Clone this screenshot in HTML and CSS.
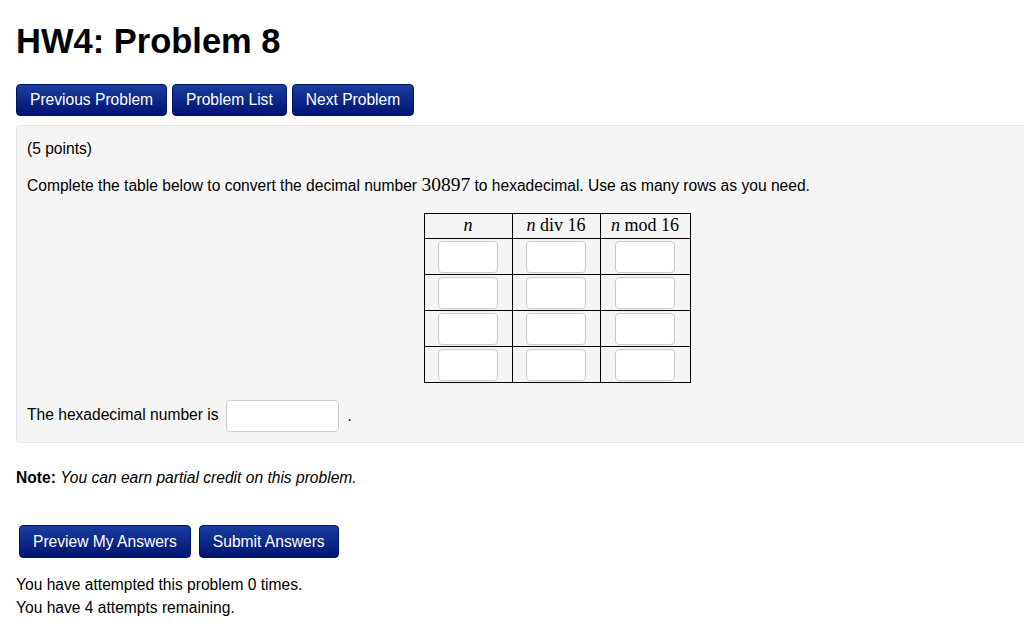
FILE: index.html
```html
<!DOCTYPE html>
<html>
<head>
<meta charset="utf-8">
<link rel="stylesheet" href="styles.css">
</head>
<body>
<div class="page">
  <h1 class="title">HW4: Problem 8</h1>
  <div class="nav">
    <button class="btn">Previous Problem</button>
    <button class="btn">Problem List</button>
    <button class="btn">Next Problem</button>
  </div>
  <div class="problem">
    <p class="line">(5 points)</p>
    <p class="line gap">Complete the table below to convert the decimal number <span class="math">30897</span> to hexadecimal. Use as many rows as you need.</p>
    <table class="conv">
      <thead>
        <tr><th><i>n</i></th><th><i>n</i> div 16</th><th><i>n</i> mod 16</th></tr>
      </thead>
      <tbody>
        <tr><td><input class="cell"></td><td><input class="cell"></td><td><input class="cell"></td></tr>
        <tr><td><input class="cell"></td><td><input class="cell"></td><td><input class="cell"></td></tr>
        <tr><td><input class="cell"></td><td><input class="cell"></td><td><input class="cell"></td></tr>
        <tr><td><input class="cell"></td><td><input class="cell"></td><td><input class="cell"></td></tr>
      </tbody>
    </table>
    <div class="hexrow">
      <span class="hexlabel">The hexadecimal number is</span>
      <input class="hex">
      <span>.</span>
    </div>
  </div>
  <p class="note"><b>Note:</b> <i>You can earn partial credit on this problem.</i></p>
  <div class="actions">
    <button class="btn big">Preview My Answers</button>
    <button class="btn big">Submit Answers</button>
  </div>
  <div class="attempts">
    <div>You have attempted this problem 0 times.</div>
    <div>You have 4 attempts remaining.</div>
  </div>
</div>
</body>
</html>
```
FILE: styles.css
```css
html, body {
  margin: 0;
  padding: 0;
  overflow: hidden;
  background: #fff;
}
body {
  font-family: "Liberation Sans", Arial, sans-serif;
  font-size: 15.6px;
  color: #000;
}
.page {
  padding-left: 16px;
  width: 1082px;
}
.title {
  margin: 21px 0 0;
  font-size: 34.5px;
  line-height: 40px;
  font-weight: bold;
}
.nav {
  margin-top: 23px;
  display: flex;
  gap: 5px;
}
.btn {
  font-family: "Liberation Sans", Arial, sans-serif;
  font-size: 15.6px;
  color: #fff;
  background: linear-gradient(to bottom, #1a3d9e, #001474);
  border: 1px solid #001262;
  border-radius: 4px;
  height: 32px;
  padding: 0 13px;
  line-height: 30px;
  cursor: pointer;
}
.problem {
  margin-top: 9px;
  background: #f5f5f5;
  border: 1px solid #e3e3e3;
  border-radius: 4px;
  padding: 13px 10px 10px;
}
.line {
  margin: 0;
  line-height: 20px;
}
.gap {
  margin-top: 16px;
}
.math {
  font-family: "Liberation Serif", "Times New Roman", serif;
  font-size: 19.5px;
}
.conv {
  margin: 17px auto 0;
  border-collapse: collapse;
  border: 1.5px solid #000;
  font-family: "Liberation Serif", "Times New Roman", serif;
  font-size: 18px;
}
.conv th {
  border: 1px solid #000;
  font-weight: normal;
  height: 22px;
  padding: 0 0 2px;
  line-height: 20px;
}
.conv th:nth-child(1), .conv th:nth-child(2) { width: 87px; }
.conv th:nth-child(3) { width: 89px; }
.conv td {
  border: 1px solid #000;
  text-align: center;
  padding: 2px 0 1px;
}
.cell {
  display: block;
  margin: 0 auto;
  box-sizing: border-box;
  width: 60px;
  height: 32px;
  border: 1px solid #cccccc;
  border-radius: 4px;
  background: #fff;
}
.hexrow {
  margin-top: 17px;
  display: flex;
  align-items: center;
  height: 32px;
}
.hexlabel {
  margin-top: -3px;
}
.hex {
  box-sizing: border-box;
  width: 113px;
  height: 32px;
  margin: 0 9px 0 7px;
  border: 1px solid #cccccc;
  border-radius: 4px;
  background: #fff;
}
.note {
  margin: 25px 0 0;
  line-height: 20px;
}
.actions {
  margin: 37px 0 0 3px;
  display: flex;
  gap: 8px;
}
.big {
  height: 33px;
  padding: 0 13px;
}
.attempts {
  margin-top: 16px;
  line-height: 22.5px;
}
```
